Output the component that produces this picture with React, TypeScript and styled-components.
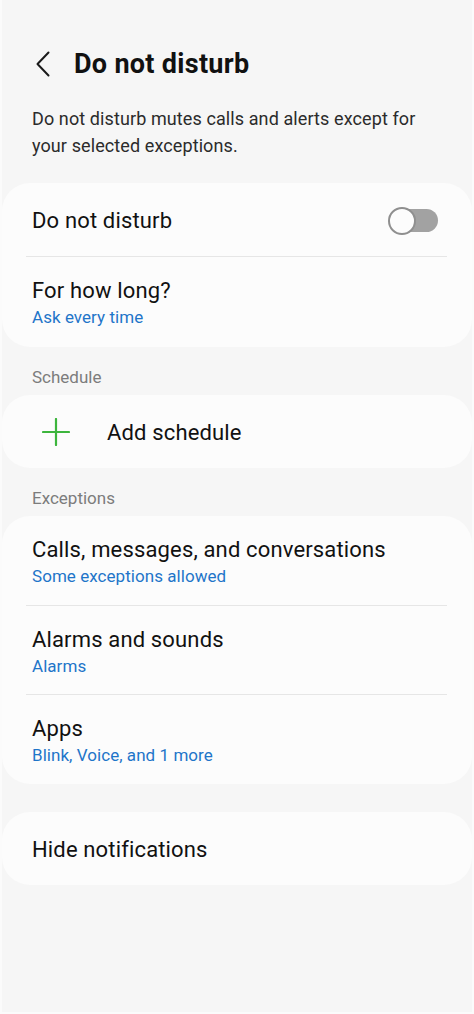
import React from "react";
import styled, { createGlobalStyle } from "styled-components";

const GlobalStyle = createGlobalStyle`
  html, body {
    margin: 0;
    padding: 0;
    background: #f6f6f6;
  }
  body {
    font-family: Roboto, "Noto Sans", "Liberation Sans", sans-serif;
    -webkit-font-smoothing: antialiased;
  }
`;

const Screen = styled.div`
  width: 474px;
  min-height: 1014px;
  box-sizing: border-box;
  background: #f6f6f6;
  border-left: 2px solid #fbfbfb;
  border-right: 2px solid #fbfbfb;
  border-bottom: 2px solid #fbfbfb;
  display: flex;
  flex-direction: column;
`;

const Header = styled.header`
  display: flex;
  align-items: center;
  height: 40px;
  margin-top: 44px;
  padding-left: 30px;
  gap: 20px;
`;

const BackButton = styled.button`
  border: 0;
  background: none;
  padding: 0;
  width: 22px;
  height: 28px;
  display: flex;
  align-items: center;
  justify-content: center;
  cursor: pointer;
`;

const Title = styled.h1`
  margin: 0;
  font-size: 27px;
  font-weight: 700;
  color: #111;
  letter-spacing: 0.3px;
`;

const Description = styled.p`
  margin: 21px 0 0;
  padding: 0 30px;
  font-size: 18px;
  line-height: 27px;
  letter-spacing: 0.1px;
  color: #2b2b2b;
`;

const Card = styled.section<{ $top?: number }>`
  margin: ${(p) => p.$top ?? 0}px 0 0;
  background: #fcfcfc;
  border-radius: 28px;
  display: flex;
  flex-direction: column;
`;

const Row = styled.div<{ $height: number; $divider?: boolean }>`
  position: relative;
  height: ${(p) => p.$height}px;
  box-sizing: border-box;
  padding: 0 30px;
  display: flex;
  align-items: center;
  gap: 36px;
  ${(p) =>
    p.$divider
      ? `&::after {
    content: "";
    position: absolute;
    left: 24px;
    right: 25px;
    bottom: 0;
    height: 1px;
    background: #e6e6e6;
  }`
      : ""}
`;

const Texts = styled.div`
  flex: 1;
  display: flex;
  flex-direction: column;
  gap: 2px;
  padding-top: 2px;
`;

const Label = styled.div`
  font-size: 22px;
  line-height: 26px;
  letter-spacing: 0.15px;
  color: #111;
`;

const Sub = styled.div`
  font-size: 17px;
  line-height: 22px;
  letter-spacing: 0.05px;
  color: #1f75c9;
`;

const SectionTitle = styled.div`
  margin: 20px 0 0;
  padding: 0 30px;
  font-size: 17px;
  line-height: 20px;
  color: #7c7c7c;
`;

const Toggle = styled.div`
  position: relative;
  width: 50px;
  height: 27px;
  flex: none;
  margin-right: 4px;
`;

const Track = styled.div`
  position: absolute;
  left: 6px;
  right: 0;
  top: 2px;
  height: 23px;
  border-radius: 12px;
  background: #a2a2a2;
`;

const Knob = styled.div`
  position: absolute;
  left: 0;
  top: 0;
  width: 24px;
  height: 24px;
  border-radius: 50%;
  background: #fcfcfc;
  border: 2px solid #8f8f8f;
`;

const PlusIcon = styled.div`
  width: 30px;
  height: 30px;
  display: flex;
  align-items: center;
  justify-content: center;
  margin-left: 9px;
  flex: none;
`;

const Chevron = () => (
  <svg width="16" height="26" viewBox="0 0 16 26" fill="none">
    <path d="M13.5 1.5 L2.5 13 L13.5 24.5" stroke="#1a1a1a" strokeWidth="2" strokeLinecap="round" strokeLinejoin="round" />
  </svg>
);

const Plus = () => (
  <svg width="28" height="28" viewBox="0 0 28 28" fill="none">
    <path d="M14 1 V27 M1 14 H27" stroke="#3db53d" strokeWidth="2.2" strokeLinecap="round" />
  </svg>
);

type Item = { label: string; sub: string };

const exceptions: Item[] = [
  { label: "Calls, messages, and conversations", sub: "Some exceptions allowed" },
  { label: "Alarms and sounds", sub: "Alarms" },
  { label: "Apps", sub: "Blink, Voice, and 1 more" },
];

export default function App() {
  return (
    <>
      <GlobalStyle />
      <Screen>
        <Header>
          <BackButton aria-label="Back">
            <Chevron />
          </BackButton>
          <Title>Do not disturb</Title>
        </Header>
        <Description>
          Do not disturb mutes calls and alerts except for your selected exceptions.
        </Description>

        <Card $top={24}>
          <Row $height={74} $divider>
            <Texts>
              <Label>Do not disturb</Label>
            </Texts>
            <Toggle>
              <Track />
              <Knob />
            </Toggle>
          </Row>
          <Row $height={90}>
            <Texts>
              <Label>For how long?</Label>
              <Sub>Ask every time</Sub>
            </Texts>
          </Row>
        </Card>

        <SectionTitle>Schedule</SectionTitle>
        <Card $top={8}>
          <Row $height={73}>
            <PlusIcon>
              <Plus />
            </PlusIcon>
            <Texts>
              <Label>Add schedule</Label>
            </Texts>
          </Row>
        </Card>

        <SectionTitle>Exceptions</SectionTitle>
        <Card $top={8}>
          {exceptions.map((item, i) => (
            <Row key={item.label} $height={i === 0 ? 90 : 89} $divider={i < exceptions.length - 1}>
              <Texts>
                <Label>{item.label}</Label>
                <Sub>{item.sub}</Sub>
              </Texts>
            </Row>
          ))}
        </Card>

        <Card $top={28}>
          <Row $height={73}>
            <Texts>
              <Label>Hide notifications</Label>
            </Texts>
          </Row>
        </Card>
      </Screen>
    </>
  );
}
